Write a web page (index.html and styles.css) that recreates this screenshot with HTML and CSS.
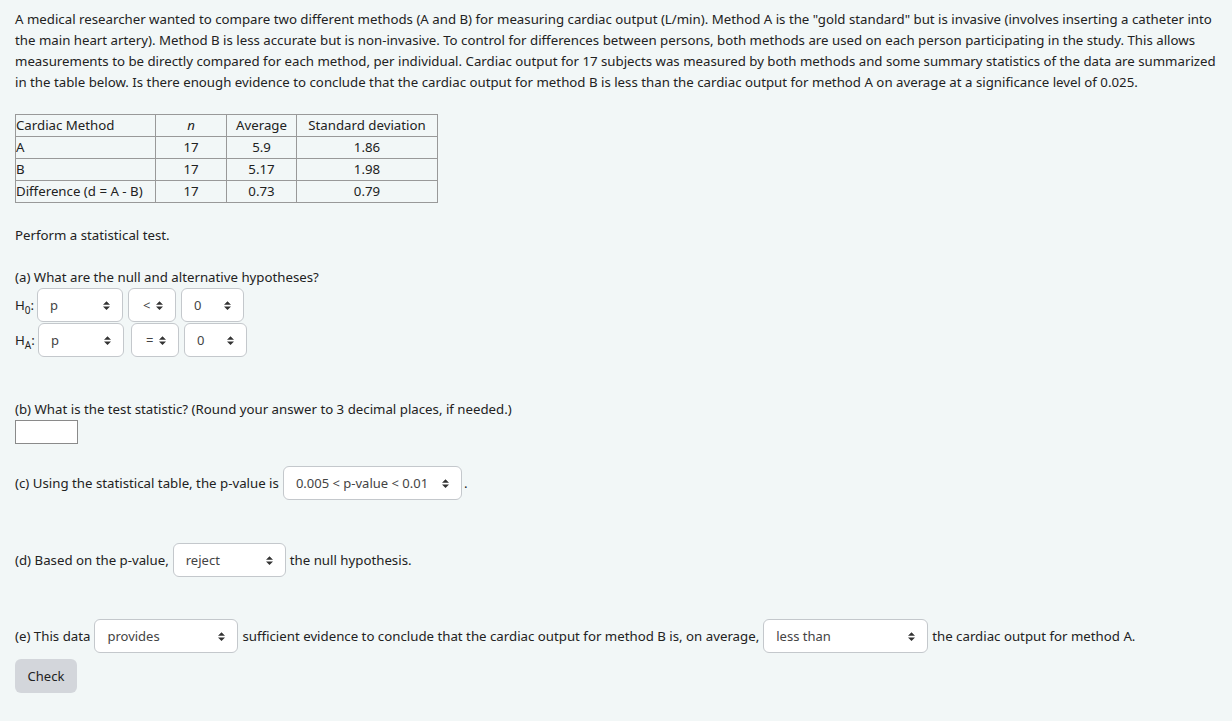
FILE: index.html
```html
<!DOCTYPE html>
<html>
<head>
<meta charset="utf-8">
<link rel="stylesheet" href="styles.css">
</head>
<body>
<div class="page">
  <p class="intro">A medical researcher wanted to compare two different methods (A and B) for measuring cardiac output (L/min). Method A is the "gold standard" but is invasive (involves inserting a catheter into the main heart artery). Method B is less accurate but is non-invasive. To control for differences between persons, both methods are used on each person participating in the study. This allows measurements to be directly compared for each method, per individual. Cardiac output for 17 subjects was measured by both methods and some summary statistics of the data are summarized in the table below. Is there enough evidence to conclude that the cardiac output for method B is less than the cardiac output for method A on average at a significance level of 0.025.</p>

  <table class="stats">
    <tr><td class="c1">Cardiac Method</td><td class="c2"><i>n</i></td><td class="c3">Average</td><td class="c4">Standard deviation</td></tr>
    <tr><td class="c1">A</td><td class="c2">17</td><td class="c3">5.9</td><td class="c4">1.86</td></tr>
    <tr><td class="c1">B</td><td class="c2">17</td><td class="c3">5.17</td><td class="c4">1.98</td></tr>
    <tr><td class="c1">Difference (d = A - B)</td><td class="c2">17</td><td class="c3">0.73</td><td class="c4">0.79</td></tr>
  </table>

  <p class="perform">Perform a statistical test.</p>

  <p class="qa">(a) What are the null and alternative hypotheses?</p>
  <div class="hyp">
    <div class="hrow">
      <span class="hlabel">H<sub>0</sub>:</span>
      <select class="sel s-p"><option>p</option></select>
      <select class="sel s-op"><option>&lt;</option></select>
      <select class="sel s-v"><option>0</option></select>
    </div>
    <div class="hrow">
      <span class="hlabel">H<sub>A</sub>:</span>
      <select class="sel s-p s-pa"><option>p</option></select>
      <select class="sel s-op s-opa"><option>=</option></select>
      <select class="sel s-v s-va"><option>0</option></select>
    </div>
  </div>

  <p class="qb">(b) What is the test statistic? (Round your answer to 3 decimal places, if needed.)</p>
  <input class="answer" type="text">

  <div class="line lc">
    <span>(c) Using the statistical table, the p-value is</span>
    <select class="sel s-c"><option>0.005 &lt; p-value &lt; 0.01</option></select>
    <span class="dot">.</span>
  </div>

  <div class="line ld">
    <span>(d) Based on the p-value,</span>
    <select class="sel s-d"><option>reject</option></select>
    <span>the null hypothesis.</span>
  </div>

  <div class="line le">
    <span>(e) This data</span>
    <select class="sel s-e1"><option>provides</option></select>
    <span>sufficient evidence to conclude that the cardiac output for method B is, on average,</span>
    <select class="sel s-e2"><option>less than</option></select>
    <span>the cardiac output for method A.</span>
  </div>

  <button class="check" type="button">Check</button>
</div>
</body>
</html>
```

FILE: styles.css
```css
html, body {
  margin: 0;
  padding: 0;
  background: #f2f7f7;
}

.page {
  padding: 9px 15px 20px 15px;
  font-family: "Noto Sans", "Open Sans", sans-serif;
  font-size: 13.25px;
  line-height: 21px;
  color: #222;
}

p {
  margin: 0;
}

.intro {
  margin-bottom: 21px;
}

.stats {
  border-collapse: collapse;
  font-size: 13.25px;
  line-height: 21px;
}

.stats td {
  border: 1px solid #999;
  padding: 0;
  height: 21px;
  text-align: center;
}

.stats td.c1 {
  text-align: left;
  width: 139px;
}

.stats td.c2 { width: 70px; }
.stats td.c3 { width: 69px; }
.stats td.c4 { width: 140px; }

.perform {
  margin-top: 22px;
}

.qa {
  margin-top: 21px;
}

.hyp {
  display: flex;
  flex-direction: column;
  gap: 1px;
}

.hrow {
  display: flex;
  align-items: center;
  gap: 5px;
}

.hlabel {
  width: 17px;
}

.hlabel sub {
  font-size: 10px;
  line-height: 0;
}

.sel {
  appearance: none;
  -webkit-appearance: none;
  height: 34px;
  border: 1px solid #c4c8cc;
  border-radius: 6px;
  background-color: #fff;
  background-image: url("data:image/svg+xml;utf8,<svg xmlns='http://www.w3.org/2000/svg' width='8' height='10' viewBox='0 0 8 10'><path d='M4 0 L8 4 H0 Z M4 10 L0 6 H8 Z' fill='%23333'/></svg>");
  background-repeat: no-repeat;
  background-position: right 12px center;
  background-size: 7px 9px;
  font-family: "Noto Sans", "Open Sans", sans-serif;
  font-size: 13px;
  color: #444;
  padding: 0 24px 0 12px;
  margin: 0;
}

.s-p { width: 86px; }
.s-op { width: 48px; padding-left: 14px; }
.s-v { width: 63px; padding-left: 12px; }
.s-pa { margin-left: 1px; }
.s-opa { margin-left: 2px; }

.qb {
  margin-top: 42px;
}

.answer {
  display: block;
  width: 63px;
  height: 24px;
  box-sizing: border-box;
  border: 1px solid #8a8a8a;
  background: #fff;
  margin: 0;
  padding: 0;
}

.line {
  display: flex;
  align-items: center;
  white-space: nowrap;
}

.line .sel {
  margin: 0 4px 0 4px;
}

.lc { margin-top: 22px; }
.ld { margin-top: 43px; }
.le { margin-top: 42px; }

.s-c { width: 179px; }
.s-d { width: 113px; }
.s-e1 { width: 144px; }
.s-e2 { width: 165px; }

.lc .s-c { margin-right: 2px; }

.check {
  margin-top: 6px;
  width: 62px;
  height: 34px;
  border: none;
  border-radius: 6px;
  background: #d3d6db;
  color: #222;
  font-family: "Noto Sans", "Open Sans", sans-serif;
  font-size: 13px;
  padding: 0;
}
```
